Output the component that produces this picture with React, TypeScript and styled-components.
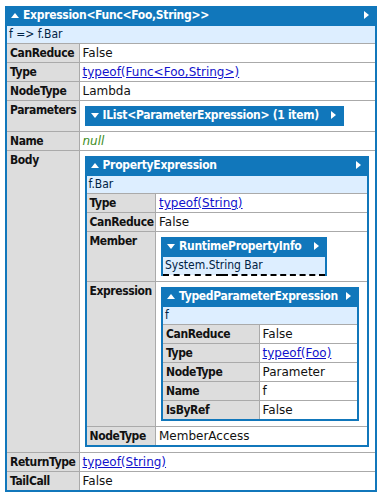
import styled, { createGlobalStyle } from 'styled-components';
import { ReactNode } from 'react';

const GlobalStyle = createGlobalStyle`
  body {
    margin: 0;
    background: #fff;
    font-family: "DejaVu Sans", Verdana, sans-serif;
  }
`;

const TriUp = () => (
  <svg width="8" height="5" viewBox="0 0 8 5">
    <polygon points="0,5 4,0 8,5" fill="#fff" />
  </svg>
);

const TriDown = () => (
  <svg width="8" height="5" viewBox="0 0 8 5">
    <polygon points="0,0 8,0 4,5" fill="#fff" />
  </svg>
);

const TriRight = () => (
  <svg width="5" height="8" viewBox="0 0 5 8">
    <polygon points="0,0 5,4 0,8" fill="#fff" />
  </svg>
);

type ObjProps = {
  title: string;
  summary?: string;
  width: number;
  keyWidth: number;
  collapsed?: boolean;
  dash?: string;
  outer?: boolean;
  children?: ReactNode;
};

const ObjTable = ({ title, summary, width, keyWidth, collapsed, dash, outer, children }: ObjProps) => (
  <Table $width={width} $outer={outer} $dash={collapsed ? dash : undefined}>
    <colgroup>
      <KeyCol $w={keyWidth} />
      <col />
    </colgroup>
    <tbody>
      <tr>
        <TypeHeader colSpan={2}>
          <HeaderInner>
            <HeaderTitle>
              {collapsed ? <TriDown /> : <TriUp />}
              {title}
            </HeaderTitle>
            <TriRight />
          </HeaderInner>
        </TypeHeader>
      </tr>
      {summary && (
        <tr>
          <Summary colSpan={2}>{summary}</Summary>
        </tr>
      )}
      {children}
    </tbody>
  </Table>
);

const Row = ({ label, children }: { label: string; children: ReactNode }) => (
  <tr>
    <Label>{label}</Label>
    <Value>{children}</Value>
  </tr>
);

const TypeOf = ({ name }: { name: string }) => <Link href="#">{`typeof(${name})`}</Link>;

export default function App() {
  return (
    <>
      <GlobalStyle />
      <ObjTable title="Expression<Func<Foo,String>>" summary="f => f.Bar" width={372} keyWidth={73} outer>
        <Row label="CanReduce">False</Row>
        <Row label="Type">
          <TypeOf name="Func<Foo,String>" />
        </Row>
        <Row label="NodeType">Lambda</Row>
        <Row label="Parameters">
          <ObjTable
            title="IList<ParameterExpression> (1 item)"
            width={259}
            keyWidth={80}
            collapsed
            dash="#1177bb"
          />
        </Row>
        <Row label="Name">
          <Null>null</Null>
        </Row>
        <Row label="Body">
          <ObjTable title="PropertyExpression" summary="f.Bar" width={284} keyWidth={70}>
            <Row label="Type">
              <TypeOf name="String" />
            </Row>
            <Row label="CanReduce">False</Row>
            <Row label="Member">
              <ObjTable
                title="RuntimePropertyInfo"
                summary="System.String Bar"
                width={166}
                keyWidth={60}
                collapsed
                dash="#000"
              />
            </Row>
            <Row label="Expression">
              <ObjTable title="TypedParameterExpression" summary="f" width={198} keyWidth={97}>
                <Row label="CanReduce">False</Row>
                <Row label="Type">
                  <TypeOf name="Foo" />
                </Row>
                <Row label="NodeType">Parameter</Row>
                <Row label="Name">f</Row>
                <Row label="IsByRef">False</Row>
              </ObjTable>
            </Row>
            <Row label="NodeType">MemberAccess</Row>
          </ObjTable>
        </Row>
        <Row label="ReturnType">
          <TypeOf name="String" />
        </Row>
        <Row label="TailCall">False</Row>
      </ObjTable>
    </>
  );
}

const Table = styled.table<{ $width: number; $outer?: boolean; $dash?: string }>`
  border-collapse: collapse;
  table-layout: fixed;
  width: ${({ $width }) => $width}px;
  border: 2px solid #1177bb;
  ${({ $dash }) => ($dash ? `border-bottom: 2px dashed ${$dash};` : '')}
  margin: ${({ $outer }) => ($outer ? '6px 0 0 5px' : '4px 2px')};
`;

const KeyCol = styled.col<{ $w: number }>`
  width: ${({ $w }) => $w}px;
`;

const TypeHeader = styled.td`
  background: #1177bb;
  color: #fff;
  font-family: "DejaVu Sans Condensed", "DejaVu Sans", sans-serif;
  font-stretch: condensed;
  font-weight: bold;
  font-size: 12px;
  letter-spacing: -0.3px;
  line-height: 14px;
  padding: 0 6px 2px 4px;
  border: 2px solid #1177bb;
`;

const HeaderInner = styled.div`
  display: flex;
  align-items: center;
  justify-content: space-between;
  white-space: nowrap;
`;

const HeaderTitle = styled.span`
  display: flex;
  align-items: center;
  gap: 4px;
`;

const Summary = styled.td`
  background: #ddeeff;
  color: #002244;
  font-family: "DejaVu Sans Condensed", "DejaVu Sans", sans-serif;
  font-stretch: condensed;
  font-size: 12px;
  line-height: 16px;
  padding: 0 2px 1px 2px;
  border: 1px solid #aaa;
  white-space: nowrap;
`;

const Label = styled.th`
  background: #dddddd;
  text-align: left;
  vertical-align: top;
  font-family: "DejaVu Sans Condensed", "DejaVu Sans", sans-serif;
  font-stretch: condensed;
  font-weight: bold;
  font-size: 12px;
  letter-spacing: -0.4px;
  line-height: 16px;
  padding: 1px 3px;
  border: 1px solid #aaa;
  color: #111;
  white-space: nowrap;
`;

const Value = styled.td`
  vertical-align: top;
  font-family: "DejaVu Sans", Verdana, sans-serif;
  font-size: 12px;
  line-height: 16px;
  padding: 1px 3px;
  border: 1px solid #aaa;
  color: #111;
  white-space: nowrap;
`;

const Link = styled.a`
  color: #1111cc;
  text-decoration: underline;
`;

const Null = styled.i`
  color: #3d8c1c;
`;
